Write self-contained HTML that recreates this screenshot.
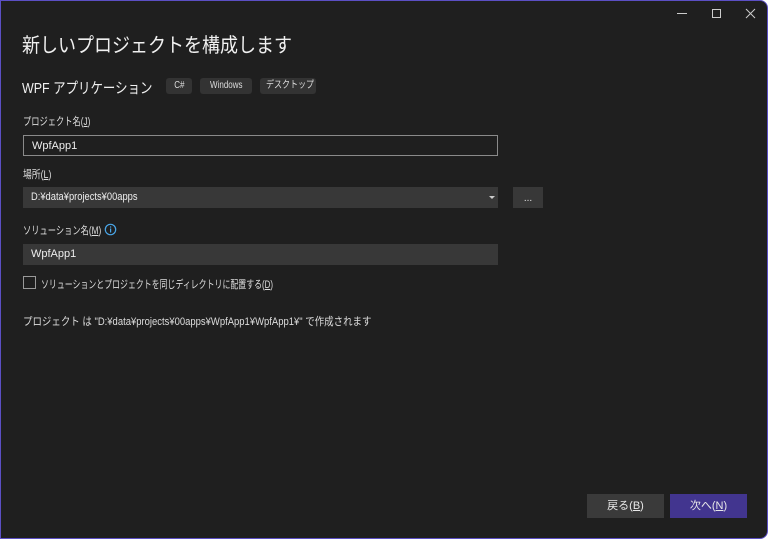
<!DOCTYPE html>
<html><head><meta charset="utf-8"><style>
html,body{margin:0;padding:0;background:#fff;}
body{width:768px;height:539px;position:relative;overflow:hidden;font-family:"Liberation Sans","Noto Sans CJK JP",sans-serif;color:#e8e8e8;}
.win{position:absolute;left:0;top:0;width:766px;height:537px;border:1px solid #5b4fc4;border-radius:0 8px 8px 0;background:#1f1f1f;}
.a{position:absolute;white-space:nowrap;transform-origin:0 0;}
.tag{position:absolute;top:77px;height:16px;background:#333;border-radius:3px;font-size:10px;line-height:16px;text-align:center;color:#ddd;white-space:nowrap;overflow:hidden;}
.tag span{display:inline-block;transform:scaleX(.8);}
.lbl{font-size:11px;color:#ddd;}
.box{position:absolute;left:22px;width:475px;height:21px;box-sizing:border-box;font-size:11px;line-height:21px;padding-left:8px;color:#eee;}
.btn{position:absolute;top:493px;height:24px;width:77px;font-size:11px;line-height:24px;text-align:center;}
u{text-decoration:underline;}
</style></head><body>
<div class="win">
<svg class="a" style="left:-1px;top:-1px" width="768" height="30">
<line x1="677" y1="13.5" x2="687" y2="13.5" stroke="#ccc" stroke-width="1"/>
<rect x="712.5" y="9.5" width="8" height="8" fill="none" stroke="#ccc"/>
<path d="M746 9 L755 18 M755 9 L746 18" stroke="#ccc" stroke-width="1"/>
</svg>
<div class="a" style="left:21px;top:28px;font-size:20px;color:#f0f0f0;transform:scaleX(.9);">新しいプロジェクトを構成します</div>
<div class="a" style="left:21px;top:76px;font-size:15px;color:#f0f0f0;transform:scaleX(.83);">WPF アプリケーション</div>
<div class="tag" style="left:165px;width:26px;"><span>C#</span></div>
<div class="tag" style="left:199px;width:52px;"><span>Windows</span></div>
<div class="tag" style="left:259px;width:56px;"><span>デスクトップ</span></div>
<div class="a lbl" style="left:22px;top:112px;transform:scaleX(.75);">プロジェクト名(<u>J</u>)</div>
<div class="box" style="top:134px;border:1px solid #8a8a8a;background:#1f1f1f;">WpfApp1</div>
<div class="a lbl" style="left:22px;top:165px;transform:scaleX(.8);">場所(<u>L</u>)</div>
<div class="box" style="top:186px;background:#383838;"><span style="display:inline-block;transform:scaleX(.85);transform-origin:0 0;">D:¥data¥projects¥00apps</span></div>
<div class="a" style="left:488px;top:195px;width:0;height:0;border-left:3px solid transparent;border-right:3px solid transparent;border-top:3px solid #ccc;"></div>
<div class="a" style="left:512px;top:186px;width:30px;height:21px;background:#383838;font-size:10px;line-height:24px;text-align:center;">...</div>
<div class="a lbl" style="left:22px;top:221px;transform:scaleX(.75);">ソリューション名(<u>M</u>)</div>
<svg class="a" style="left:103px;top:222px" width="13" height="13"><circle cx="6.5" cy="6.5" r="5.2" fill="none" stroke="#4aa6e8" stroke-width="1.2"/><rect x="6" y="5.5" width="1.2" height="4" fill="#4aa6e8"/><rect x="6" y="3.4" width="1.2" height="1.2" fill="#4aa6e8"/></svg>
<div class="box" style="top:243px;background:#383838;">WpfApp1</div>
<div class="a" style="left:22px;top:275px;width:13px;height:13px;box-sizing:border-box;border:1px solid #999;"></div>
<div class="a lbl" style="left:40px;top:275px;transform:scaleX(.72);">ソリューションとプロジェクトを同じディレクトリに配置する(<u>D</u>)</div>
<div class="a lbl" style="left:22px;top:312px;transform:scaleX(.86);">プロジェクト は "D:¥data¥projects¥00apps¥WpfApp1¥WpfApp1¥" で作成されます</div>
<div class="btn" style="left:586px;background:#3a3a3a;">戻る(<u>B</u>)</div>
<div class="btn" style="left:669px;background:#42358f;">次へ(<u>N</u>)</div>
</div>
</body></html>
